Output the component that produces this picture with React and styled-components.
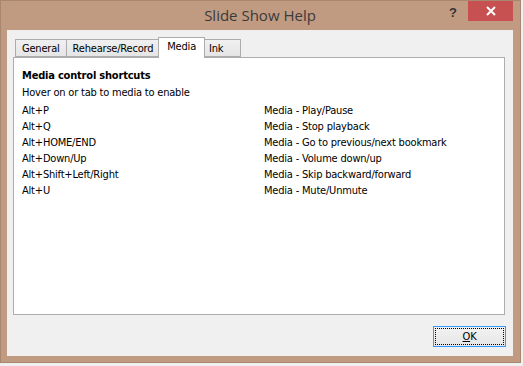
import React from "react";
import styled, { createGlobalStyle } from "styled-components";

const Global = createGlobalStyle`
  html, body { margin: 0; padding: 0; background: #f0f0f0; }
  body { font-family: "DejaVu Sans Condensed", "DejaVu Sans", sans-serif; }
  * { box-sizing: border-box; }
`;

const Window = styled.div`
  width: 521px;
  height: 363px;
  background: #c09b82;
  border: 1px solid #a88670;
  display: flex;
  flex-direction: column;
  padding: 0 7px 6px 6px;
`;

const TitleBar = styled.div`
  height: 30px;
  display: grid;
  grid-template-columns: 1fr auto 1fr;
  align-items: start;
`;

const Title = styled.div`
  grid-column: 2;
  font-family: "Open Sans", "Noto Sans", sans-serif;
  font-size: 15px;
  color: #3a3a3a;
  line-height: 28px;
`;

const Controls = styled.div`
  grid-column: 3;
  justify-self: end;
  display: flex;
  align-items: flex-start;
`;

const HelpBtn = styled.div`
  width: 30px;
  height: 20px;
  font-family: "Liberation Sans", sans-serif;
  font-weight: bold;
  font-size: 13px;
  color: #333;
  display: flex;
  align-items: center;
  justify-content: center;
  margin-top: 1px;
`;

const CloseBtn = styled.div`
  width: 45px;
  height: 20px;
  background: #c75050;
  display: flex;
  align-items: center;
  justify-content: center;
`;

const Client = styled.div`
  flex: 1;
  background: #f0f0f0;
  display: flex;
  flex-direction: column;
  padding: 7px 8px 9px 6px;
  font-size: 11px;
  letter-spacing: -0.2px;
  color: #000;
`;

const TabStrip = styled.div`
  display: flex;
  align-items: flex-end;
  height: 20px;
  padding-left: 2px;
  position: relative;
  z-index: 1;
`;

const Tab = styled.div`
  height: ${(p) => (p.$active ? "21px" : "18px")};
  min-width: 38px;
  margin: ${(p) => (p.$active ? "0 -2px -1px -2px" : "0")};
  padding: 0 ${(p) => (p.$active ? "8px" : "6px")};
  padding-top: ${(p) => (p.$active ? "2px" : "0")};
  border: 1px solid #acacac;
  border-bottom: ${(p) => (p.$active ? "none" : "1px solid #acacac")};
  border-left: ${(p) => (p.$first || p.$active ? "1px solid #acacac" : "none")};
  background: ${(p) => (p.$active ? "#ffffff" : "linear-gradient(#f0f0f0, #e5e5e5)")};
  display: flex;
  align-items: ${(p) => (p.$active ? "flex-start" : "center")};
  position: relative;
  z-index: ${(p) => (p.$active ? 2 : 1)};
`;

const Panel = styled.div`
  height: 258px;
  background: #fff;
  border: 1px solid #adadad;
  padding: 10px 8px;
`;

const Heading = styled.div`
  font-weight: bold;
  line-height: 16px;
`;

const Line = styled.div`
  line-height: 16px;
  margin-top: 1px;
`;

const Shortcuts = styled.div`
  display: grid;
  grid-template-columns: 242px 1fr;
  margin-top: 2px;
  line-height: 16px;
`;

const Footer = styled.div`
  display: flex;
  justify-content: flex-end;
  margin-top: 11px;
  margin-right: -1px;
`;

const Button = styled.div`
  width: 73px;
  height: 21px;
  border: 1px solid #3399ff;
  background: linear-gradient(#f2f2f2, #e6e6e6);
  padding: 1px;
`;

const Focus = styled.div`
  width: 100%;
  height: 100%;
  border: 1px dotted #000;
  display: flex;
  align-items: center;
  justify-content: center;
`;

const rows = [
  ["Alt+P", "Media - Play/Pause"],
  ["Alt+Q", "Media - Stop playback"],
  ["Alt+HOME/END", "Media - Go to previous/next bookmark"],
  ["Alt+Down/Up", "Media - Volume down/up"],
  ["Alt+Shift+Left/Right", "Media - Skip backward/forward"],
  ["Alt+U", "Media - Mute/Unmute"],
];

export default function App() {
  return (
    <>
      <Global />
      <Window>
        <TitleBar>
          <Title>Slide Show Help</Title>
          <Controls>
            <HelpBtn>?</HelpBtn>
            <CloseBtn>
              <svg width="10" height="10" viewBox="0 0 10 10">
                <path d="M1 1 L9 9 M9 1 L1 9" stroke="#fff" strokeWidth="2" />
              </svg>
            </CloseBtn>
          </Controls>
        </TitleBar>
        <Client>
          <TabStrip>
            <Tab $first>General</Tab>
            <Tab>Rehearse/Record</Tab>
            <Tab $active>Media</Tab>
            <Tab>Ink</Tab>
          </TabStrip>
          <Panel>
            <Heading>Media control shortcuts</Heading>
            <Line>Hover on or tab to media to enable</Line>
            <Shortcuts>
              {rows.map(([k, v]) => (
                <React.Fragment key={k}>
                  <div>{k}</div>
                  <div>{v}</div>
                </React.Fragment>
              ))}
            </Shortcuts>
          </Panel>
          <Footer>
            <Button>
              <Focus>
                <span><u>O</u>K</span>
              </Focus>
            </Button>
          </Footer>
        </Client>
      </Window>
    </>
  );
}
